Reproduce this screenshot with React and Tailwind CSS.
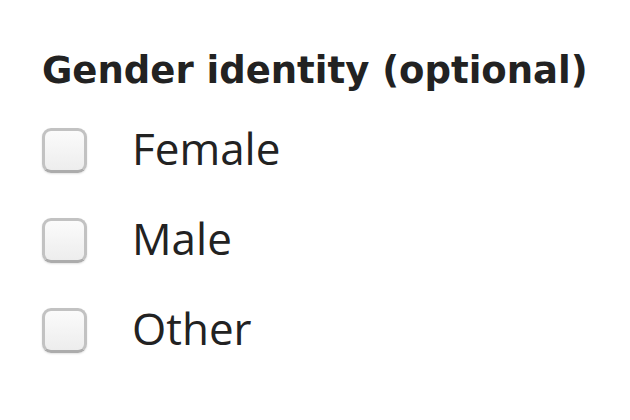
export default function App() {
  const options = ['Female', 'Male', 'Other']

  return (
    <div className="w-[630px] h-[420px] bg-white overflow-hidden text-[#222]">
      <div className="pl-[42px] pt-[52px]">
        <h2 className="font-['DejaVu_Sans',sans-serif] text-[37px] leading-none font-bold">Gender identity (optional)</h2>
        <div className="mt-[39px] flex flex-col gap-[45px] font-['Open_Sans',sans-serif]">
          {options.map((opt) => (
            <label key={opt} className="flex items-center h-[45px]">
              <span className="w-[45px] h-[45px] rounded-[9px] border-[3px] border-[#c2c2c2] border-b-[#acacac] bg-gradient-to-b from-[#fbfbfb] to-[#ededed] shadow-[0_1px_2px_rgba(0,0,0,0.12)]"></span>
              <span className="ml-[45px] pb-[6px] text-[44px] leading-none">{opt}</span>
            </label>
          ))}
        </div>
      </div>
    </div>
  )
}
